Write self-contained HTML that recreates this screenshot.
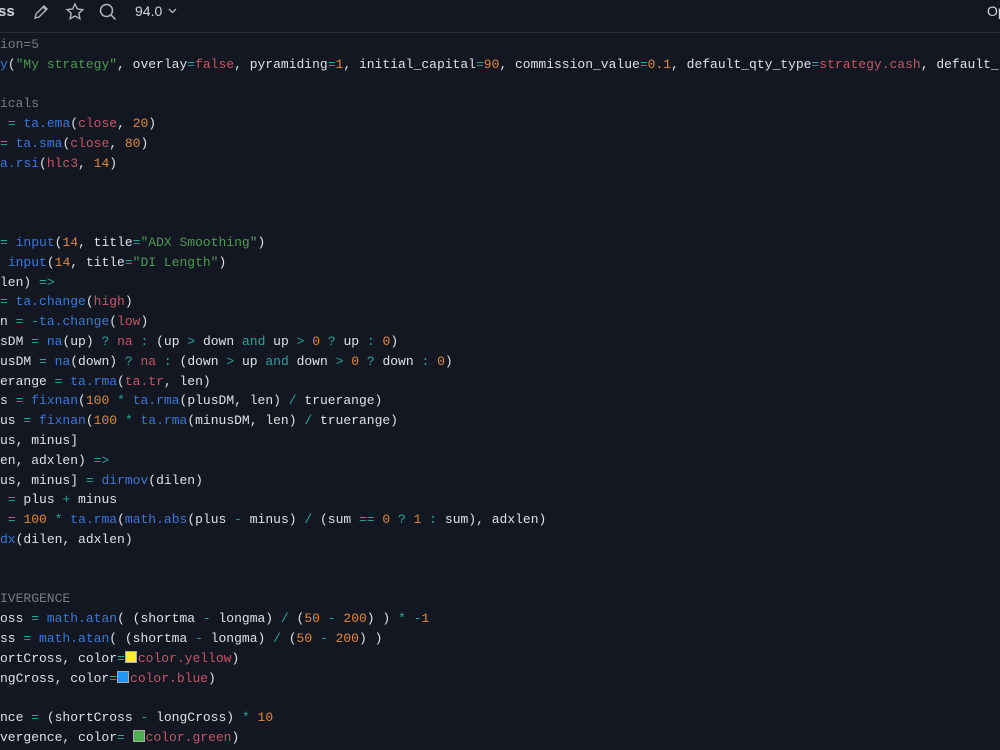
<!DOCTYPE html>
<html><head><meta charset="utf-8"><style>
html,body{margin:0;padding:0;background:#131722;width:1000px;height:750px;overflow:hidden}
.hdr{position:absolute;left:0;top:0;width:1000px;height:32px;border-bottom:1px solid #2a2e39;color:#d1d4dc;font-family:"Liberation Sans",sans-serif;font-size:14px}
.hdr span{position:absolute;top:3px}
pre{position:absolute;left:0;top:35px;margin:0;font-family:"Liberation Mono",monospace;font-size:13px;line-height:19.8px;color:#dfe1e8;font-weight:normal;letter-spacing:0}
.c{color:#787b86}.s{color:#4e9a52}.n{color:#e0883a}.f{color:#3a78d8}.o{color:#26a69a}.r{color:#c75468}
.sw{display:inline-block;width:10px;height:10px;vertical-align:-1px;margin-right:1px;border:1px solid #aaa}
</style></head><body>
<div class="hdr">
<span style="left:-2px;font-weight:bold;font-size:15px">ss</span>
<svg style="position:absolute;left:32px;top:3px" width="18" height="18" viewBox="0 0 18 18" fill="none" stroke="#b2b5be" stroke-width="1.4"><path d="M3 15l1-4 8-8 3 3-8 8z M11 4l3 3"/></svg>
<svg style="position:absolute;left:65px;top:2px" width="20" height="19" viewBox="0 0 20 19" fill="none" stroke="#b2b5be" stroke-width="1.4"><path d="M10 2l2.4 5 5.4.6-4 3.7 1.1 5.4L10 14l-4.9 2.7 1.1-5.4-4-3.7 5.4-.6z"/></svg>
<svg style="position:absolute;left:98px;top:2px" width="20" height="20" viewBox="0 0 20 20" fill="none" stroke="#b2b5be" stroke-width="1.5"><circle cx="8.5" cy="8.5" r="6"/><path d="M13 13l4.5 4.5"/></svg>
<span style="left:135px">94.0</span>
<svg style="position:absolute;left:168px;top:8px" width="9" height="6" viewBox="0 0 9 6" fill="none" stroke="#b2b5be" stroke-width="1.3"><path d="M1 1l3.5 3.5L8 1"/></svg>
<span style="left:987px">Op</span>
</div>
<pre><span class="c">ion=5</span>
<span class="f">y</span>(<span class="s">"My strategy"</span>, overlay<span class="o">=</span><span class="r">false</span>, pyramiding<span class="o">=</span><span class="n">1</span>, initial_capital<span class="o">=</span><span class="n">90</span>, commission_value<span class="o">=</span><span class="n">0.1</span>, default_qty_type<span class="o">=</span><span class="r">strategy.cash</span>, default_

<span class="c">icals</span>
 <span class="o">=</span> <span class="f">ta.ema</span>(<span class="r">close</span>, <span class="n">20</span>)
<span class="o">=</span> <span class="f">ta.sma</span>(<span class="r">close</span>, <span class="n">80</span>)
<span class="f">a.rsi</span>(<span class="r">hlc3</span>, <span class="n">14</span>)



<span class="o">=</span> <span class="f">input</span>(<span class="n">14</span>, title<span class="o">=</span><span class="s">"ADX Smoothing"</span>)
 <span class="f">input</span>(<span class="n">14</span>, title<span class="o">=</span><span class="s">"DI Length"</span>)
len) <span class="o">=&gt;</span>
<span class="o">=</span> <span class="f">ta.change</span>(<span class="r">high</span>)
n <span class="o">=</span> <span class="o">-</span><span class="f">ta.change</span>(<span class="r">low</span>)
sDM <span class="o">=</span> <span class="f">na</span>(up) <span class="o">?</span> <span class="r">na</span> <span class="o">:</span> (up <span class="o">&gt;</span> down <span class="o">and</span> up <span class="o">&gt;</span> <span class="n">0</span> <span class="o">?</span> up <span class="o">:</span> <span class="n">0</span>)
usDM <span class="o">=</span> <span class="f">na</span>(down) <span class="o">?</span> <span class="r">na</span> <span class="o">:</span> (down <span class="o">&gt;</span> up <span class="o">and</span> down <span class="o">&gt;</span> <span class="n">0</span> <span class="o">?</span> down <span class="o">:</span> <span class="n">0</span>)
erange <span class="o">=</span> <span class="f">ta.rma</span>(<span class="r">ta.tr</span>, len)
s <span class="o">=</span> <span class="f">fixnan</span>(<span class="n">100</span> <span class="o">*</span> <span class="f">ta.rma</span>(plusDM, len) <span class="o">/</span> truerange)
us <span class="o">=</span> <span class="f">fixnan</span>(<span class="n">100</span> <span class="o">*</span> <span class="f">ta.rma</span>(minusDM, len) <span class="o">/</span> truerange)
us, minus]
en, adxlen) <span class="o">=&gt;</span>
us, minus] <span class="o">=</span> <span class="f">dirmov</span>(dilen)
 <span class="o">=</span> plus <span class="o">+</span> minus
 <span class="o">=</span> <span class="n">100</span> <span class="o">*</span> <span class="f">ta.rma</span>(<span class="f">math.abs</span>(plus <span class="o">-</span> minus) <span class="o">/</span> (sum <span class="o">==</span> <span class="n">0</span> <span class="o">?</span> <span class="n">1</span> <span class="o">:</span> sum), adxlen)
<span class="f">dx</span>(dilen, adxlen)


<span class="c">IVERGENCE</span>
oss <span class="o">=</span> <span class="f">math.atan</span>( (shortma <span class="o">-</span> longma) <span class="o">/</span> (<span class="n">50</span> <span class="o">-</span> <span class="n">200</span>) ) <span class="o">*</span> <span class="o">-</span><span class="n">1</span>
ss <span class="o">=</span> <span class="f">math.atan</span>( (shortma <span class="o">-</span> longma) <span class="o">/</span> (<span class="n">50</span> <span class="o">-</span> <span class="n">200</span>) )
ortCross, color<span class="o">=</span><span class="sw" style="background:#ffeb3b"></span><span class="r">color.yellow</span>)
ngCross, color<span class="o">=</span><span class="sw" style="background:#2196f3"></span><span class="r">color.blue</span>)

nce <span class="o">=</span> (shortCross <span class="o">-</span> longCross) <span class="o">*</span> <span class="n">10</span>
vergence, color<span class="o">=</span> <span class="sw" style="background:#4caf50"></span><span class="r">color.green</span>)</pre>
</body></html>
